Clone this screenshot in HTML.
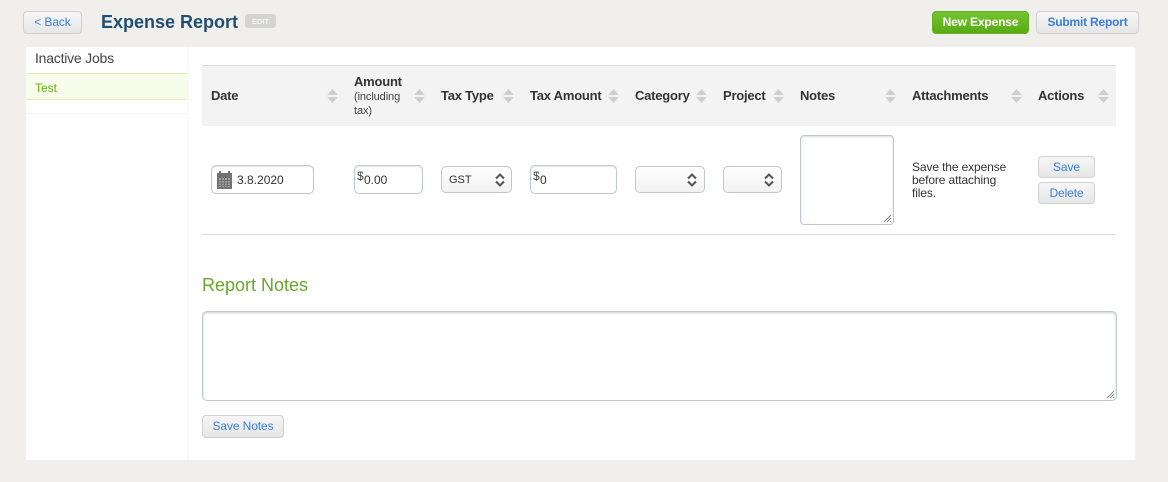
<!DOCTYPE html>
<html><head><meta charset="utf-8"><style>
html,body{margin:0;padding:0}
body{width:1168px;height:482px;position:relative;overflow:hidden;background:#f0efeb;font-family:"Liberation Sans",Arial,sans-serif;color:#333}
.a{position:absolute;white-space:nowrap}
.btn{position:absolute;box-sizing:border-box;border:1px solid #d0d0d0;border-radius:4px;background:linear-gradient(#f6f6f6,#e6e6e6);color:#3b7fd6;font-size:12px;text-align:center;letter-spacing:-.1px}
.th{position:absolute;font-size:13px;font-weight:bold;color:#333;white-space:nowrap;line-height:15px;letter-spacing:-.22px}
.inp{position:absolute;box-sizing:border-box;border:1px solid #c0c8cc;border-radius:5px;background:#fff;height:29px;top:165px;box-shadow:inset 0 1px 1px #e8e8e8;font-size:12px;color:#333}
.sel{position:absolute;box-sizing:border-box;border:1px solid #c0c8cc;border-radius:5px;background:linear-gradient(#fefefe,#f2f2f2);height:27px;top:166px;font-size:11px;color:#333}
svg{position:absolute;display:block}
</style></head><body>

<div class="btn" style="left:23px;top:11px;width:59px;height:23px;line-height:21px">&lt; Back</div>
<div class="a" style="left:101px;top:11px;font-size:18px;font-weight:bold;color:#1f4e74;line-height:22px">Expense Report</div>
<div class="a" style="left:245px;top:14px;width:31px;height:14px;background:#d4d4d0;border-radius:3px;color:#f6f6f3;font-size:7.500px;font-weight:bold;text-align:center;line-height:16px">EDIT</div>
<div class="btn" style="left:932px;top:11px;width:97px;height:23px;line-height:21px;background:linear-gradient(#74c432,#58ab12);border-color:#62b020;color:#fff;font-weight:bold;letter-spacing:-.15px">New Expense</div>
<div class="btn" style="left:1036px;top:11px;width:103px;height:23px;line-height:21px;font-weight:bold;letter-spacing:-.2px">Submit Report</div>

<div class="a" style="left:26px;top:47px;width:1109px;height:413px;background:#fff"></div>
<div class="a" style="left:187px;top:47px;width:2px;height:413px;background:#f9f9f7"></div>

<div class="a" style="left:35px;top:50px;font-size:14px;color:#444;line-height:17px;letter-spacing:-.22px">Inactive Jobs</div>
<div class="a" style="left:26px;top:73px;width:161px;height:25px;background:#f6fdea;border-top:1px solid #e2f0b4;border-bottom:1px solid #e2f0b4"></div>
<div class="a" style="left:35px;top:81px;font-size:12px;color:#6cae12;line-height:15px">Test</div>
<div class="a" style="left:26px;top:113px;width:161px;height:1px;background:#f2f2f2"></div>

<div class="a" style="left:202px;top:65px;width:914px;height:61px;background:#f3f3f3;border-top:1px solid #dcdcdc;box-sizing:border-box"></div>
<div class="a" style="left:202px;top:234px;width:914px;height:1px;background:#dcdcdc"></div>

<div class="th" style="left:211px;top:88px">Date</div>
<div class="th" style="left:354px;top:74px">Amount</div>
<div class="a" style="left:354px;top:90px;font-size:11px;line-height:14px;color:#444;letter-spacing:-.1px">(including<br>tax)</div>
<div class="th" style="left:441px;top:88px">Tax Type</div>
<div class="th" style="left:530px;top:88px">Tax Amount</div>
<div class="th" style="left:635px;top:88px">Category</div>
<div class="th" style="left:723px;top:88px">Project</div>
<div class="th" style="left:800px;top:88px">Notes</div>
<div class="th" style="left:912px;top:88px">Attachments</div>
<div class="th" style="left:1038px;top:88px">Actions</div>

<svg style="left:327px;top:89px" width="11" height="14"><path d="M5.500 0L11 6H0zM0 8h11l-5.500 6z" fill="#cfcfcf"/></svg>
<svg style="left:414px;top:89px" width="11" height="14"><path d="M5.500 0L11 6H0zM0 8h11l-5.500 6z" fill="#cfcfcf"/></svg>
<svg style="left:503px;top:89px" width="11" height="14"><path d="M5.500 0L11 6H0zM0 8h11l-5.500 6z" fill="#cfcfcf"/></svg>
<svg style="left:608px;top:89px" width="11" height="14"><path d="M5.500 0L11 6H0zM0 8h11l-5.500 6z" fill="#cfcfcf"/></svg>
<svg style="left:696px;top:89px" width="11" height="14"><path d="M5.500 0L11 6H0zM0 8h11l-5.500 6z" fill="#cfcfcf"/></svg>
<svg style="left:773px;top:89px" width="11" height="14"><path d="M5.500 0L11 6H0zM0 8h11l-5.500 6z" fill="#cfcfcf"/></svg>
<svg style="left:885px;top:89px" width="11" height="14"><path d="M5.500 0L11 6H0zM0 8h11l-5.500 6z" fill="#cfcfcf"/></svg>
<svg style="left:1011px;top:89px" width="11" height="14"><path d="M5.500 0L11 6H0zM0 8h11l-5.500 6z" fill="#cfcfcf"/></svg>
<svg style="left:1098px;top:89px" width="11" height="14"><path d="M5.500 0L11 6H0zM0 8h11l-5.500 6z" fill="#cfcfcf"/></svg>

<div class="inp" style="left:211px;width:103px"></div>
<svg style="left:217px;top:170px" width="15" height="19"><path d="M0 3h2V1h2v2h7V1h2v2h2v16H0z" fill="#737373"/><path d="M2 8h11v9H2z" fill="#a0a0a0"/><path d="M2 10.500h11M2 13h11M2 15.500h11M4.500 8v9M7.500 8v9M10.500 8v9" stroke="#737373" stroke-width="1"/></svg>
<div class="a" style="left:237px;top:173px;font-size:12px;line-height:15px;color:#333">3.8.2020</div>

<div class="inp" style="left:354px;width:69px"></div>
<div class="a" style="left:357px;top:169px;font-size:12px;line-height:15px;color:#444">$</div>
<div class="a" style="left:364px;top:173px;font-size:12px;line-height:15px;color:#333">0.00</div>

<div class="sel" style="left:441px;width:71px"></div>
<div class="a" style="left:449px;top:173px;font-size:11px;line-height:14px;color:#333">GST</div>

<div class="inp" style="left:530px;width:87px"></div>
<div class="a" style="left:533px;top:169px;font-size:12px;line-height:15px;color:#444">$</div>
<div class="a" style="left:540px;top:173px;font-size:12px;line-height:15px;color:#333">0</div>

<div class="sel" style="left:635px;width:70px"></div>
<div class="sel" style="left:723px;width:59px"></div>

<svg style="left:495px;top:173px" width="10" height="14"><path d="M1 5.500L5 1.500 9 5.500M1 8.500L5 12.500 9 8.500" fill="none" stroke="#555" stroke-width="2"/></svg>
<svg style="left:687px;top:173px" width="10" height="14"><path d="M1 5.500L5 1.500 9 5.500M1 8.500L5 12.500 9 8.500" fill="none" stroke="#555" stroke-width="2"/></svg>
<svg style="left:764px;top:173px" width="10" height="14"><path d="M1 5.500L5 1.500 9 5.500M1 8.500L5 12.500 9 8.500" fill="none" stroke="#555" stroke-width="2"/></svg>

<div class="a" style="left:800px;top:135px;width:94px;height:90px;box-sizing:border-box;border:1px solid #c0c8cc;border-radius:4px;box-shadow:inset 0 1px 2px #ddd"></div>
<svg style="left:883px;top:214px" width="9" height="9"><path d="M1 8L8 1M4 8L8 4M7 8L8 7" stroke="#666" stroke-width="0.800" fill="none"/></svg>

<div class="a" style="left:912px;top:161px;font-size:12px;line-height:13px;color:#333;letter-spacing:-.12px">Save the expense<br>before attaching<br>files.</div>

<div class="btn" style="left:1038px;top:156px;width:57px;height:22px;line-height:20px">Save</div>
<div class="btn" style="left:1038px;top:182px;width:57px;height:22px;line-height:20px">Delete</div>

<div class="a" style="left:202px;top:274px;font-size:18px;line-height:22px;color:#68a62a">Report Notes</div>

<div class="a" style="left:202px;top:311px;width:915px;height:90px;box-sizing:border-box;border:1px solid #c0c8cc;border-radius:5px;box-shadow:inset 0 1px 2px #ccc"></div>
<svg style="left:1106px;top:390px" width="9" height="9"><path d="M1 8L8 1M4 8L8 4M7 8L8 7" stroke="#666" stroke-width="0.800" fill="none"/></svg>

<div class="btn" style="left:202px;top:415px;width:82px;height:23px;line-height:21px">Save Notes</div>

</body></html>
